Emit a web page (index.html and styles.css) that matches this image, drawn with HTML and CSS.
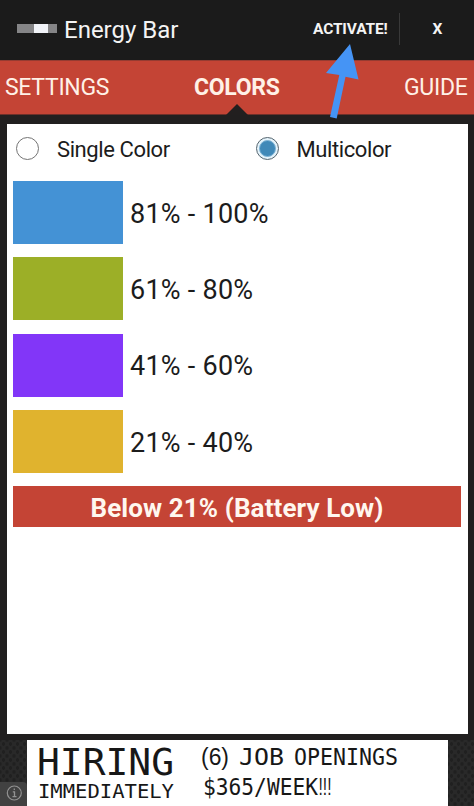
FILE: index.html
```html
<!DOCTYPE html>
<html lang="en">
<head>
<meta charset="utf-8">
<title>Energy Bar</title>
<link rel="stylesheet" href="styles.css">
</head>
<body>
<div class="app">
  <header class="topbar">
    <div class="logo"><i class="dim"></i><i class="lit"></i><i class="end"></i></div>
    <h1 class="title">Energy Bar</h1>
    <button class="action activate">ACTIVATE!</button>
    <button class="action close">X</button>
  </header>
  <nav class="tabs">
    <span class="tab settings">SETTINGS</span>
    <span class="tab current">COLORS</span>
    <span class="tab guide">GUIDE</span>
    <svg class="notch" width="22" height="11" viewBox="0 0 22 11"><path d="M0 11L11 0L22 11Z" fill="#221f1f"/></svg>
  </nav>
  <main class="panel">
    <div class="modes">
      <label class="mode"><span class="radio"></span><span class="single">Single Color</span></label>
      <label class="mode"><span class="radio on"></span><span class="multi">Multicolor</span></label>
    </div>
    <div class="levels">
      <div class="level"><span class="swatch blue"></span><span class="range">81% - 100%</span></div>
      <div class="level"><span class="swatch green"></span><span class="range">61% - 80%</span></div>
      <div class="level"><span class="swatch purple"></span><span class="range">41% - 60%</span></div>
      <div class="level"><span class="swatch gold"></span><span class="range">21% - 40%</span></div>
    </div>
    <div class="low"><span>Below 21% (Battery Low)</span></div>
  </main>
  <footer class="adbar">
    <div class="side">
      <svg class="info" width="27" height="24" viewBox="0 0 27 24"><path d="M0 0H23Q27 0 27 4V24H0Z" fill="#414141"/><circle cx="14.3" cy="11" r="7" fill="none" stroke="#929292" stroke-width="1.2"/><path d="M14.3 6.5V8M12.8 9.8H14.5V14.7M12.5 14.7H16.5" fill="none" stroke="#929292" stroke-width="1.3"/></svg>
    </div>
    <svg class="ad" width="421" height="66" viewBox="27 740 421 66">
      <g class="hand">
        <text class="big" x="37" y="774.5" textLength="137" lengthAdjust="spacingAndGlyphs">HIRING</text>
        <text class="small" x="38" y="797.5" textLength="136" lengthAdjust="spacingAndGlyphs">IMMEDIATELY</text>
        <text class="mid bang" x="201" y="764.5" textLength="28" lengthAdjust="spacingAndGlyphs">(6)</text>
        <text class="mid" x="239" y="764.5" textLength="45" lengthAdjust="spacingAndGlyphs">JOB</text>
        <text class="mid" x="294" y="764.5" textLength="104" lengthAdjust="spacingAndGlyphs">OPENINGS</text>
        <text class="mid" x="203" y="795" textLength="115" lengthAdjust="spacingAndGlyphs">$365/WEEK</text>
        <text class="mid bang" x="318.5" y="795" textLength="13" lengthAdjust="spacingAndGlyphs">!!!</text>
      </g>
    </svg>
  </footer>
  <svg class="pointer" width="34" height="76" viewBox="325 43 34 76"><path d="M350 44L358.5 79.5L345.5 76.8L336.7 118.5L330 117L339.3 75L326 73Z" fill="#4594f5"/></svg>
</div>
</body>
</html>
```
FILE: styles.css
```css
* { box-sizing: border-box; }
body { margin: 0; font-family: Roboto, "Liberation Sans", sans-serif; }
.app {
  position: relative;
  width: 474px;
  height: 806px;
  overflow: hidden;
  display: flex;
  flex-direction: column;
  background: #211f1f;
}
.topbar { height: 60px; display: flex; align-items: center; background: #1b1b1b; color: #f4f4f4; }
.logo { display: flex; width: 40px; height: 9px; margin: -4px 0 0 17px; }
.dim { width: 17px; background: #858587; }
.lit { width: 14px; background: #f1f3f8; }
.end { width: 9px; background: #858587; }
.title { width: 237px; margin: 0 0 0 7px; font-size: 24px; line-height: 28px; font-weight: 400; white-space: nowrap; }
.action { padding: 0; border: 0; background: none; color: #f4f4f4; font: 700 15.5px/18px Roboto, sans-serif; text-align: left; white-space: nowrap; }
.activate { width: 87px; height: 32px; margin: -2px 0 0 12px; border-right: 1px solid #393939; letter-spacing: -0.15px; }
.close { margin: -2px 0 0 32.5px; }
.tabs { position: relative; height: 55px; display: flex; align-items: center; background: #c44435; border-top: 1px solid #963b31; border-bottom: 1px solid #6e3029; color: #fff1e7; font-size: 23px; line-height: 27px; white-space: nowrap; }
.tab { margin-top: -1px; letter-spacing: -0.3px; }
.settings { width: 188px; padding-left: 5px; }
.current { width: 210px; padding-left: 6px; font-weight: 700; }
.guide { padding-left: 6px; }
.notch { position: absolute; left: 226px; bottom: -1px; }
.panel { width: 461px; height: 610px; margin: 9px 0 0 6.5px; padding: 0 6.5px; background: #fff; color: #1c1c1c; }
.modes { display: grid; grid-template-columns: 239.5px 1fr; height: 57px; padding: 12px 0 0 3px; }
.mode { display: flex; align-items: center; gap: 17px; height: 25px; font-size: 22px; line-height: 26px; letter-spacing: -0.4px; white-space: nowrap; }
.single, .multi { padding-top: 3px; }
.radio { display: flex; align-items: center; justify-content: center; width: 23px; height: 23px; margin-right: 1px; border: 1px solid #747474; border-radius: 50%; }
.on { background: #e4f3fb; border-color: #56656e; }
.on::before { content: ""; width: 15px; height: 15px; border-radius: 50%; background: #4089b8; border: 1px solid #7fb4d6; }
.levels { display: flex; flex-direction: column; gap: 13.4px; }
.level { display: flex; align-items: center; gap: 7px; height: 63px; font-size: 27px; line-height: 32px; letter-spacing: 0.25px; }
.range { padding-top: 2px; }
.swatch { width: 110px; height: 63px; }
.blue { background: #4492d5; }
.green { background: #9caf27; }
.purple { background: #8236f8; }
.gold { background: #e0b32e; }
.low { height: 41px; margin-top: 13px; background: #c44435; color: #fff7ef; font-size: 26px; font-weight: 700; line-height: 44px; letter-spacing: 0.1px; text-align: center; }
.adbar { display: flex; height: 66px; margin-top: 6px; background-color: #292929; background-image: radial-gradient(circle, #202020 1.5px, transparent 2px), radial-gradient(circle, #202020 1.5px, transparent 2px); background-size: 7px 8px; background-position: 0 0, 3.5px 4px; }
.side { display: flex; align-items: flex-end; width: 26.5px; }
.info { display: block; flex: none; }
.ad { background: #fff; flex: none; }
.hand { font-family: "DejaVu Sans Mono", monospace; fill: #171717; }
.big { font-size: 36.5px; }
.small { font-size: 19px; }
.mid { font-size: 23px; }
.bang { font-family: "Liberation Sans", sans-serif; }
.pointer { position: absolute; left: 325px; top: 43px; }
```
